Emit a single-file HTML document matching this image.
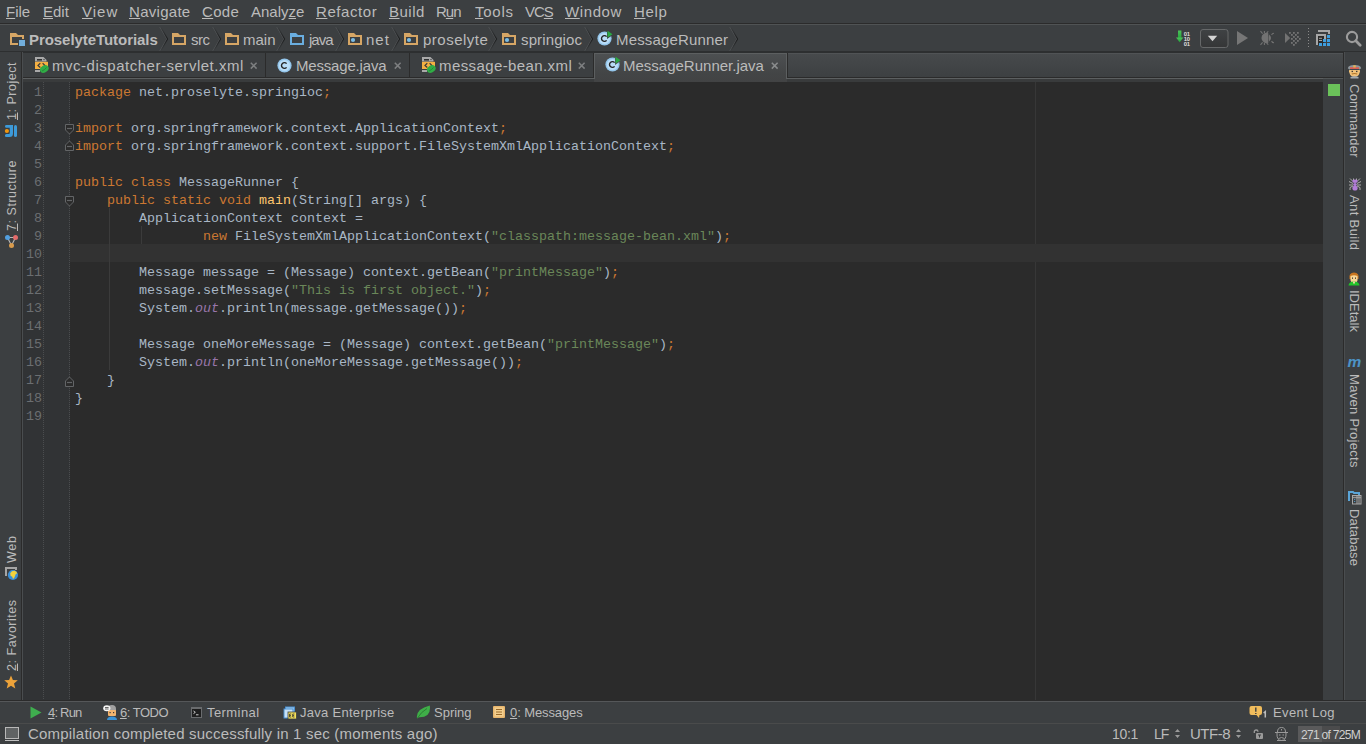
<!DOCTYPE html><html><head><meta charset="utf-8"><style>
*{margin:0;padding:0;box-sizing:border-box}
html,body{width:1366px;height:744px;overflow:hidden;background:#3c3f41;font-family:"Liberation Sans",sans-serif;color:#bbbbbb}
div,span,svg{position:absolute}
.t{white-space:nowrap;line-height:15px;font-size:15px;color:#bbbbbb}
.u{text-decoration:underline;text-underline-offset:1px;text-decoration-thickness:1px}
.code{left:75px;font-family:"Liberation Mono",monospace;font-size:13.33px;line-height:18px;color:#a9b7c6;white-space:pre}
.ln{font-family:"Liberation Mono",monospace;font-size:13.33px;line-height:18px;color:#6b6e71;white-space:pre;text-align:right;left:23px;width:19px}
.k{position:static;color:#cc7832}.s{position:static;color:#6a8759}.m{position:static;color:#ffc66d}.i{position:static;color:#9876aa;font-style:italic}
</style></head><body>
<div style="left:0px;top:0px;width:1366px;height:23px;background:#3c3f41;"></div>
<div style="left:0px;top:23px;width:1366px;height:1px;background:#2b2b2b;"></div>
<div style="left:0px;top:24px;width:1366px;height:1px;background:#505354;"></div>
<div style="left:0px;top:25px;width:1366px;height:27px;background:#3c3f41;"></div>
<div style="left:0px;top:51px;width:1366px;height:1px;background:#2d2f30;"></div>
<div style="left:0px;top:52px;width:21px;height:650px;background:#3c3f41;"></div>
<div style="left:21px;top:52px;width:1px;height:650px;background:#2b2b2b;"></div>
<div style="left:22px;top:52px;width:1px;height:650px;background:#4a4d4f;"></div>
<div style="left:1345px;top:52px;width:21px;height:650px;background:#3c3f41;"></div>
<div style="left:1343px;top:52px;width:1px;height:650px;background:#2b2b2b;"></div>
<div style="left:1344px;top:52px;width:1px;height:650px;background:#4a4d4f;"></div>
<div style="left:23px;top:52px;width:1320px;height:1px;background:#2d2f30;"></div>
<div style="left:23px;top:53px;width:1320px;height:24px;background:#3c3f41;"></div>
<div style="left:23px;top:77px;width:1320px;height:1px;background:#2b2b2b;"></div>
<div style="left:23px;top:78px;width:1320px;height:1px;background:#515556;"></div>
<div style="left:23px;top:79px;width:1300px;height:3px;background:#393b3c;"></div>
<div style="left:23px;top:82px;width:47px;height:618px;background:#313335;"></div>
<div style="left:70px;top:82px;width:1253px;height:618px;background:#2b2b2b;"></div>
<div style="left:1035px;top:82px;width:1px;height:618px;background:#373737;"></div>
<div style="left:70px;top:244px;width:1253px;height:18px;background:#323232;"></div>
<div style="left:1323px;top:79px;width:20px;height:621px;background:#3c3f41;"></div>
<div style="left:0px;top:700px;width:1366px;height:1px;background:#2b2b2b;"></div>
<div style="left:0px;top:701px;width:1366px;height:1px;background:#555759;"></div>
<div style="left:0px;top:702px;width:1366px;height:21px;background:#3c3f41;"></div>
<div style="left:0px;top:723px;width:1366px;height:21px;background:#3c3f41;"></div>
<div style="left:0px;top:723px;width:1366px;height:1px;background:#4a4b4b;"></div>
<span class="t" style="left:6.00px;top:4px;font-size:15px;line-height:15px;color:#bbbbbb;letter-spacing:0.000px;"><span class="u" style="position:static">F</span>ile</span>
<span class="t" style="left:43.00px;top:4px;font-size:15px;line-height:15px;color:#bbbbbb;letter-spacing:0.000px;"><span class="u" style="position:static">E</span>dit</span>
<span class="t" style="left:82.00px;top:4px;font-size:15px;line-height:15px;color:#bbbbbb;letter-spacing:1.000px;"><span class="u" style="position:static">V</span>iew</span>
<span class="t" style="left:129.00px;top:4px;font-size:15px;line-height:15px;color:#bbbbbb;letter-spacing:0.286px;"><span class="u" style="position:static">N</span>avigate</span>
<span class="t" style="left:202.00px;top:4px;font-size:15px;line-height:15px;color:#bbbbbb;letter-spacing:0.333px;"><span class="u" style="position:static">C</span>ode</span>
<span class="t" style="left:251.00px;top:4px;font-size:15px;line-height:15px;color:#bbbbbb;letter-spacing:0.000px;">Analy<span class="u" style="position:static">z</span>e</span>
<span class="t" style="left:316.00px;top:4px;font-size:15px;line-height:15px;color:#bbbbbb;letter-spacing:0.571px;"><span class="u" style="position:static">R</span>efactor</span>
<span class="t" style="left:389.00px;top:4px;font-size:15px;line-height:15px;color:#bbbbbb;letter-spacing:0.500px;"><span class="u" style="position:static">B</span>uild</span>
<span class="t" style="left:436.00px;top:4px;font-size:15px;line-height:15px;color:#bbbbbb;letter-spacing:-1.000px;">R<span class="u" style="position:static">u</span>n</span>
<span class="t" style="left:475.00px;top:4px;font-size:15px;line-height:15px;color:#bbbbbb;letter-spacing:0.750px;"><span class="u" style="position:static">T</span>ools</span>
<span class="t" style="left:525.00px;top:4px;font-size:15px;line-height:15px;color:#bbbbbb;letter-spacing:-1.000px;">VC<span class="u" style="position:static">S</span></span>
<span class="t" style="left:565.00px;top:4px;font-size:15px;line-height:15px;color:#bbbbbb;letter-spacing:0.600px;"><span class="u" style="position:static">W</span>indow</span>
<span class="t" style="left:634.00px;top:4px;font-size:15px;line-height:15px;color:#bbbbbb;letter-spacing:0.667px;"><span class="u" style="position:static">H</span>elp</span>
<svg style="left:10px;top:33px;" width="16" height="14" viewBox="0 0 16 14"><path d="M0 0h6l2 2h6v10h-14z" fill="#d6a665"/><rect x="2" y="4" width="10" height="6" fill="#3c3f41"/><rect x="8" y="6" width="8" height="8" fill="#3c3f41"/><rect x="9" y="7" width="6" height="6" fill="#72aedb"/></svg>
<span class="t" style="left:29.00px;top:32px;font-size:15px;line-height:15px;color:#bbbbbb;letter-spacing:-0.059px;;font-weight:bold">ProselyteTutorials</span>
<svg style="left:159px;top:27px;" width="10" height="24" viewBox="0 0 10 24"><defs><linearGradient id="cg1" gradientUnits="userSpaceOnUse" x1="0" y1="0" x2="0" y2="24"><stop offset="0" stop-color="#3c3f41"/><stop offset="0.5" stop-color="#1c1d1e"/><stop offset="1" stop-color="#3c3f41"/></linearGradient></defs><path d="M0.8 0 L7.8 12 L0.8 24" stroke="#505355" stroke-width="1" fill="none"/><path d="M1.8 0 L8.6 12 L1.8 24" stroke="url(#cg1)" stroke-width="1.1" fill="none"/></svg>
<svg style="left:172px;top:33px;" width="16" height="14" viewBox="0 0 16 14"><path d="M0 0h6l2 2h6v10h-14z" fill="#d6a665"/><rect x="2" y="4" width="10" height="6" fill="#3c3f41"/></svg>
<span class="t" style="left:191.00px;top:32px;font-size:15px;line-height:15px;color:#bbbbbb;letter-spacing:-0.500px;">src</span>
<svg style="left:212px;top:27px;" width="10" height="24" viewBox="0 0 10 24"><defs><linearGradient id="cg2" gradientUnits="userSpaceOnUse" x1="0" y1="0" x2="0" y2="24"><stop offset="0" stop-color="#3c3f41"/><stop offset="0.5" stop-color="#1c1d1e"/><stop offset="1" stop-color="#3c3f41"/></linearGradient></defs><path d="M0.8 0 L7.8 12 L0.8 24" stroke="#505355" stroke-width="1" fill="none"/><path d="M1.8 0 L8.6 12 L1.8 24" stroke="url(#cg2)" stroke-width="1.1" fill="none"/></svg>
<svg style="left:225px;top:33px;" width="16" height="14" viewBox="0 0 16 14"><path d="M0 0h6l2 2h6v10h-14z" fill="#d6a665"/><rect x="2" y="4" width="10" height="6" fill="#3c3f41"/></svg>
<span class="t" style="left:243.00px;top:32px;font-size:15px;line-height:15px;color:#bbbbbb;letter-spacing:0.000px;">main</span>
<svg style="left:276px;top:27px;" width="10" height="24" viewBox="0 0 10 24"><defs><linearGradient id="cg3" gradientUnits="userSpaceOnUse" x1="0" y1="0" x2="0" y2="24"><stop offset="0" stop-color="#3c3f41"/><stop offset="0.5" stop-color="#1c1d1e"/><stop offset="1" stop-color="#3c3f41"/></linearGradient></defs><path d="M0.8 0 L7.8 12 L0.8 24" stroke="#505355" stroke-width="1" fill="none"/><path d="M1.8 0 L8.6 12 L1.8 24" stroke="url(#cg3)" stroke-width="1.1" fill="none"/></svg>
<svg style="left:290px;top:33px;" width="16" height="14" viewBox="0 0 16 14"><path d="M0 0h6l2 2h6v10h-14z" fill="#6aaee0"/><rect x="2" y="4" width="10" height="6" fill="#3c3f41"/></svg>
<span class="t" style="left:309.00px;top:32px;font-size:15px;line-height:15px;color:#bbbbbb;letter-spacing:-1.000px;">java</span>
<svg style="left:335px;top:27px;" width="10" height="24" viewBox="0 0 10 24"><defs><linearGradient id="cg4" gradientUnits="userSpaceOnUse" x1="0" y1="0" x2="0" y2="24"><stop offset="0" stop-color="#3c3f41"/><stop offset="0.5" stop-color="#1c1d1e"/><stop offset="1" stop-color="#3c3f41"/></linearGradient></defs><path d="M0.8 0 L7.8 12 L0.8 24" stroke="#505355" stroke-width="1" fill="none"/><path d="M1.8 0 L8.6 12 L1.8 24" stroke="url(#cg4)" stroke-width="1.1" fill="none"/></svg>
<svg style="left:348px;top:33px;" width="16" height="14" viewBox="0 0 16 14"><path d="M0 0h6l2 2h6v10h-14z" fill="#d6a665"/><rect x="2" y="4" width="10" height="6" fill="#3c3f41"/><circle cx="5" cy="7" r="2.1" fill="#7bbde6"/></svg>
<span class="t" style="left:366.00px;top:32px;font-size:15px;line-height:15px;color:#bbbbbb;letter-spacing:1.000px;">net</span>
<svg style="left:391px;top:27px;" width="10" height="24" viewBox="0 0 10 24"><defs><linearGradient id="cg5" gradientUnits="userSpaceOnUse" x1="0" y1="0" x2="0" y2="24"><stop offset="0" stop-color="#3c3f41"/><stop offset="0.5" stop-color="#1c1d1e"/><stop offset="1" stop-color="#3c3f41"/></linearGradient></defs><path d="M0.8 0 L7.8 12 L0.8 24" stroke="#505355" stroke-width="1" fill="none"/><path d="M1.8 0 L8.6 12 L1.8 24" stroke="url(#cg5)" stroke-width="1.1" fill="none"/></svg>
<svg style="left:404px;top:33px;" width="16" height="14" viewBox="0 0 16 14"><path d="M0 0h6l2 2h6v10h-14z" fill="#d6a665"/><rect x="2" y="4" width="10" height="6" fill="#3c3f41"/><circle cx="5" cy="7" r="2.1" fill="#7bbde6"/></svg>
<span class="t" style="left:423.00px;top:32px;font-size:15px;line-height:15px;color:#bbbbbb;letter-spacing:0.500px;">proselyte</span>
<svg style="left:488px;top:27px;" width="10" height="24" viewBox="0 0 10 24"><defs><linearGradient id="cg6" gradientUnits="userSpaceOnUse" x1="0" y1="0" x2="0" y2="24"><stop offset="0" stop-color="#3c3f41"/><stop offset="0.5" stop-color="#1c1d1e"/><stop offset="1" stop-color="#3c3f41"/></linearGradient></defs><path d="M0.8 0 L7.8 12 L0.8 24" stroke="#505355" stroke-width="1" fill="none"/><path d="M1.8 0 L8.6 12 L1.8 24" stroke="url(#cg6)" stroke-width="1.1" fill="none"/></svg>
<svg style="left:502px;top:33px;" width="16" height="14" viewBox="0 0 16 14"><path d="M0 0h6l2 2h6v10h-14z" fill="#d6a665"/><rect x="2" y="4" width="10" height="6" fill="#3c3f41"/><circle cx="5" cy="7" r="2.1" fill="#7bbde6"/></svg>
<span class="t" style="left:521.00px;top:32px;font-size:15px;line-height:15px;color:#bbbbbb;letter-spacing:0.125px;">springioc</span>
<svg style="left:584px;top:27px;" width="10" height="24" viewBox="0 0 10 24"><defs><linearGradient id="cg7" gradientUnits="userSpaceOnUse" x1="0" y1="0" x2="0" y2="24"><stop offset="0" stop-color="#3c3f41"/><stop offset="0.5" stop-color="#1c1d1e"/><stop offset="1" stop-color="#3c3f41"/></linearGradient></defs><path d="M0.8 0 L7.8 12 L0.8 24" stroke="#505355" stroke-width="1" fill="none"/><path d="M1.8 0 L8.6 12 L1.8 24" stroke="url(#cg7)" stroke-width="1.1" fill="none"/></svg>
<svg style="left:597px;top:31px;" width="17" height="16" viewBox="0 0 17 16"><circle cx="7.5" cy="7.5" r="7.1" fill="#95c7ec"/><circle cx="7.5" cy="7.5" r="5.6" fill="#b9ddf8"/><path d="M9.6 5.6 A2.9 2.9 0 1 0 9.6 9.4" stroke="#262626" stroke-width="1.4" fill="none"/><path d="M10 -1 L16.5 3.5 L10 8z" fill="#3c3f41"/><path d="M10.5 -0.3 L15.5 3.2 L10.5 6.7z" fill="#2aa844"/></svg>
<span class="t" style="left:616.00px;top:32px;font-size:15px;line-height:15px;color:#bbbbbb;letter-spacing:0.167px;">MessageRunner</span>
<svg style="left:729px;top:27px;" width="10" height="24" viewBox="0 0 10 24"><defs><linearGradient id="cg8" gradientUnits="userSpaceOnUse" x1="0" y1="0" x2="0" y2="24"><stop offset="0" stop-color="#3c3f41"/><stop offset="0.5" stop-color="#1c1d1e"/><stop offset="1" stop-color="#3c3f41"/></linearGradient></defs><path d="M0.8 0 L7.8 12 L0.8 24" stroke="#505355" stroke-width="1" fill="none"/><path d="M1.8 0 L8.6 12 L1.8 24" stroke="url(#cg8)" stroke-width="1.1" fill="none"/></svg>
<svg style="left:1175px;top:29px;" width="17" height="18" viewBox="0 0 17 18"><defs><linearGradient id="ga" x1="0" y1="0" x2="0" y2="1"><stop offset="0" stop-color="#4cc35a"/><stop offset="1" stop-color="#23a33a"/></linearGradient></defs><rect x="3" y="1.5" width="3.4" height="8" fill="url(#ga)"/><path d="M1 8.5 H8.4 L4.7 13.2 Z" fill="url(#ga)"/><g font-family="Liberation Sans" font-weight="bold" font-size="5.9" fill="#dedede" letter-spacing="-0.2"><text x="8.7" y="6.9">01</text><text x="8.7" y="12">10</text><text x="8.7" y="17">01</text></g></svg>
<svg style="left:1200px;top:29px;" width="29" height="19" viewBox="0 0 29 19"><defs><linearGradient id="gd" x1="0" y1="0" x2="0" y2="1"><stop offset="0" stop-color="#3f4244"/><stop offset="1" stop-color="#353637"/></linearGradient></defs><rect x="0.5" y="0.5" width="27.5" height="18" rx="2.5" fill="url(#gd)" stroke="#666869"/><path d="M7.8 6.8 H17.2 L12.5 12.2 Z" fill="#d4d4d4"/></svg>
<svg style="left:1236px;top:30px;" width="13" height="16" viewBox="0 0 13 16"><path d="M1 1 L12 8 L1 15 Z" fill="#767676"/></svg>
<svg style="left:1256px;top:28px;" width="20" height="20" viewBox="0 0 20 20"><g fill="#727272"><path d="M12.3 5.2 A5.1 5.1 0 1 0 12.3 14.8 Z"/><path d="M13.1 6.6 Q16.9 10 13.1 13.4 Q12.3 10 13.1 6.6 Z"/></g><g stroke="#727272" stroke-width="1.1" fill="none"><path d="M4.5 3.2 L6.6 5.6 M8.4 3 V5 M12.2 3.2 L10.6 5.4 M4.5 16.8 L6.6 14.4 M8.4 17 V15 M12.2 16.8 L10.6 14.6 M15.6 7 Q16.2 5.2 18 5.2 M15.6 13 Q16.2 14.8 18 14.8"/></g></svg>
<svg style="left:1284px;top:28px;" width="18" height="20" viewBox="0 0 18 20"><path d="M1 5 L6.2 10 L1 15 Z" fill="#727272"/><g fill="#7a7a7a"><rect x="5" y="4" width="1.8" height="1.8" rx="0.6"/><rect x="7" y="6" width="1.8" height="1.8" rx="0.6"/><rect x="7" y="10" width="1.8" height="1.8" rx="0.6"/><rect x="7" y="14" width="1.8" height="1.8" rx="0.6"/><rect x="9" y="4" width="1.8" height="1.8" rx="0.6"/><rect x="9" y="8" width="1.8" height="1.8" rx="0.6"/><rect x="9" y="12" width="1.8" height="1.8" rx="0.6"/><rect x="9" y="16" width="1.8" height="1.8" rx="0.6"/><rect x="11" y="6" width="1.8" height="1.8" rx="0.6"/><rect x="11" y="10" width="1.8" height="1.8" rx="0.6"/><rect x="11" y="14" width="1.8" height="1.8" rx="0.6"/><rect x="13" y="4" width="1.8" height="1.8" rx="0.6"/><rect x="13" y="8" width="1.8" height="1.8" rx="0.6"/><rect x="13" y="12" width="1.8" height="1.8" rx="0.6"/><rect x="15" y="10" width="1.8" height="1.8" rx="0.6"/></g></svg>
<svg style="left:1308px;top:28px;" width="1" height="20" viewBox="0 0 1 20"><path d="M0.5 0 V20" stroke="#8a8a8a" stroke-dasharray="1 2"/></svg>
<svg style="left:1315px;top:30px;" width="17" height="17" viewBox="0 0 17 17"><path d="M3 1 H14 V4" stroke="#a6a6a6" stroke-width="2" fill="none"/><path d="M2 15 V5 H10 V9" stroke="#a6a6a6" stroke-width="2" fill="none"/><rect x="3" y="6" width="6" height="9" fill="#2b2b2b"/><path d="M4 8.3 H7 M4 10.5 H7" stroke="#a6a6a6" stroke-width="1"/><g fill="#3d9ee0"><rect x="12" y="5" width="3" height="3"/><rect x="8" y="9" width="3" height="3"/><rect x="12" y="9" width="3" height="3"/><rect x="4" y="13" width="3" height="3"/><rect x="8" y="13" width="3" height="3"/><rect x="12" y="13" width="3" height="3"/></g></svg>
<svg style="left:1344px;top:29px;" width="19" height="19" viewBox="0 0 19 19"><circle cx="8" cy="8" r="5.1" fill="none" stroke="#9c9c9c" stroke-width="2.1"/><path d="M11.8 11.8 L16.2 16.2" stroke="#9c9c9c" stroke-width="2.8" stroke-linecap="round"/></svg>
<div style="left:265px;top:53px;width:1px;height:24px;background:#2b2b2b;"></div>
<div style="left:409px;top:53px;width:1px;height:24px;background:#2b2b2b;"></div>
<div style="left:593px;top:53px;width:1px;height:24px;background:#2b2b2b;"></div>
<div style="left:594px;top:53px;width:193px;height:29px;background:linear-gradient(#4d5052,#434546 70%,#424344)"></div>
<div style="left:594px;top:53px;width:1px;height:26px;background:#5c5f60;"></div>
<div style="left:594px;top:53px;width:193px;height:1px;background:#5c5f60;"></div>
<div style="left:786px;top:53px;width:1px;height:26px;background:#5c5f60;"></div>
<div style="left:787px;top:53px;width:1px;height:25px;background:#2b2b2b;"></div>
<div style="left:23px;top:78px;width:571px;height:1px;background:#5c5f60;"></div>
<div style="left:787px;top:78px;width:536px;height:1px;background:#5c5f60;"></div>
<div style="left:788px;top:53px;width:555px;height:24px;background:linear-gradient(#474a4c,#3d4042)"></div>
<div style="left:788px;top:53px;width:555px;height:1px;background:#505355;"></div>
<svg style="left:34px;top:57px;" width="16" height="16" viewBox="0 0 16 16"><path d="M1 0 H9.5 L12.5 3 V4.5 H1 Z" fill="#a9a9a9"/><rect x="3" y="2" width="5" height="1.6" fill="#2f3132"/><circle cx="10" cy="2.6" r="0.7" fill="#2f3132"/><rect x="1" y="4.8" width="13" height="7.2" fill="#f5b042"/><path d="M6.3 6.3 L4 8.4 L6.3 10.5 M8.6 6.3 L10.9 8.4 L8.6 10.5" stroke="#3a3a3a" stroke-width="1.2" fill="none"/><rect x="1" y="13" width="5" height="2" fill="#a9a9a9"/><ellipse cx="10.3" cy="12" rx="4.6" ry="3.4" transform="rotate(-30 10.3 12)" fill="#30ad46"/><path d="M8 14 Q10.5 13 12.5 10.5" stroke="#1f7a30" stroke-width="0.7" fill="none"/></svg>
<span class="t" style="left:52.00px;top:58px;font-size:15px;line-height:15px;color:#bbbbbb;letter-spacing:0.520px;">mvc-dispatcher-servlet.xml</span>
<svg style="left:250px;top:62px;" width="8" height="8" viewBox="0 0 8 8"><path d="M0.8 0.8 L6.6 6.6 M6.6 0.8 L0.8 6.6" stroke="#7d7f80" stroke-width="1.5"/></svg>
<svg style="left:277px;top:58px;" width="17" height="16" viewBox="0 0 17 16"><circle cx="7.5" cy="7.5" r="7.1" fill="#95c7ec"/><circle cx="7.5" cy="7.5" r="5.6" fill="#b9ddf8"/><path d="M9.6 5.6 A2.9 2.9 0 1 0 9.6 9.4" stroke="#262626" stroke-width="1.4" fill="none"/></svg>
<span class="t" style="left:296.00px;top:58px;font-size:15px;line-height:15px;color:#bbbbbb;letter-spacing:-0.182px;">Message.java</span>
<svg style="left:394px;top:62px;" width="8" height="8" viewBox="0 0 8 8"><path d="M0.8 0.8 L6.6 6.6 M6.6 0.8 L0.8 6.6" stroke="#7d7f80" stroke-width="1.5"/></svg>
<svg style="left:421px;top:57px;" width="16" height="16" viewBox="0 0 16 16"><path d="M1 0 H9.5 L12.5 3 V4.5 H1 Z" fill="#a9a9a9"/><rect x="3" y="2" width="5" height="1.6" fill="#2f3132"/><circle cx="10" cy="2.6" r="0.7" fill="#2f3132"/><rect x="1" y="4.8" width="13" height="7.2" fill="#f5b042"/><path d="M6.3 6.3 L4 8.4 L6.3 10.5 M8.6 6.3 L10.9 8.4 L8.6 10.5" stroke="#3a3a3a" stroke-width="1.2" fill="none"/><rect x="1" y="13" width="5" height="2" fill="#a9a9a9"/><ellipse cx="10.3" cy="12" rx="4.6" ry="3.4" transform="rotate(-30 10.3 12)" fill="#30ad46"/><path d="M8 14 Q10.5 13 12.5 10.5" stroke="#1f7a30" stroke-width="0.7" fill="none"/></svg>
<span class="t" style="left:439.00px;top:58px;font-size:15px;line-height:15px;color:#bbbbbb;letter-spacing:0.400px;">message-bean.xml</span>
<svg style="left:578px;top:62px;" width="8" height="8" viewBox="0 0 8 8"><path d="M0.8 0.8 L6.6 6.6 M6.6 0.8 L0.8 6.6" stroke="#7d7f80" stroke-width="1.5"/></svg>
<svg style="left:605px;top:57px;" width="17" height="16" viewBox="0 0 17 16"><circle cx="7.5" cy="7.5" r="7.1" fill="#95c7ec"/><circle cx="7.5" cy="7.5" r="5.6" fill="#b9ddf8"/><path d="M9.6 5.6 A2.9 2.9 0 1 0 9.6 9.4" stroke="#262626" stroke-width="1.4" fill="none"/><path d="M10 -1 L16.5 3.5 L10 8z" fill="#4b4e50"/><path d="M10.5 -0.3 L15.5 3.2 L10.5 6.7z" fill="#2aa844"/></svg>
<span class="t" style="left:623.00px;top:58px;font-size:15px;line-height:15px;color:#bbbbbb;letter-spacing:0.000px;">MessageRunner.java</span>
<svg style="left:771px;top:62px;" width="8" height="8" viewBox="0 0 8 8"><path d="M0.8 0.8 L6.6 6.6 M6.6 0.8 L0.8 6.6" stroke="#8a8c8d" stroke-width="1.5"/></svg>
<div style="left:43px;top:82px;width:1px;height:618px;background:repeating-linear-gradient(#4b4d4f 0 1px,transparent 1px 2px)"></div>
<div style="left:69px;top:82px;width:1px;height:618px;background:repeating-linear-gradient(#4b4d4f 0 1px,transparent 1px 2px)"></div>
<div class="ln" style="top:84px">1
2
3
4
5
6
7
8
9
10
11
12
13
14
15
16
17
18
19
</div>
<svg style="left:65px;top:124px;" width="9" height="11" viewBox="0 0 9 11"><path d="M0.5 0.5 H8.5 V6 L4.5 10 L0.5 6 Z" fill="#2b2b2b" stroke="#636567"/><path d="M2 4.5 H7" stroke="#636567" stroke-width="1.2"/></svg>
<svg style="left:65px;top:140px;" width="9" height="11" viewBox="0 0 9 11"><path d="M0.5 10.5 H8.5 V5 L4.5 1 L0.5 5 Z" fill="#2b2b2b" stroke="#636567"/><path d="M2 6.5 H7" stroke="#636567" stroke-width="1.2"/></svg>
<svg style="left:65px;top:196px;" width="9" height="11" viewBox="0 0 9 11"><path d="M0.5 0.5 H8.5 V6 L4.5 10 L0.5 6 Z" fill="#2b2b2b" stroke="#636567"/><path d="M2 4.5 H7" stroke="#636567" stroke-width="1.2"/></svg>
<svg style="left:65px;top:376px;" width="9" height="11" viewBox="0 0 9 11"><path d="M0.5 10.5 H8.5 V5 L4.5 1 L0.5 5 Z" fill="#2b2b2b" stroke="#636567"/><path d="M2 6.5 H7" stroke="#636567" stroke-width="1.2"/></svg>
<div style="left:109px;top:208px;width:1px;height:162px;background:#3b3b3b;"></div>
<div style="left:141px;top:226px;width:1px;height:18px;background:#3b3b3b;"></div>
<div class="code" style="top:84px"><span class="k">package</span> net.proselyte.springioc<span class="k">;</span>

<span class="k">import</span> org.springframework.context.ApplicationContext<span class="k">;</span>
<span class="k">import</span> org.springframework.context.support.FileSystemXmlApplicationContext<span class="k">;</span>

<span class="k">public class</span> MessageRunner {
    <span class="k">public static void </span><span class="m">main</span>(String[] args) {
        ApplicationContext context =
                <span class="k">new </span>FileSystemXmlApplicationContext(<span class="s">&quot;classpath:message-bean.xml&quot;</span>)<span class="k">;</span>

        Message message = (Message) context.getBean(<span class="s">&quot;printMessage&quot;</span>)<span class="k">;</span>
        message.setMessage(<span class="s">&quot;This is first object.&quot;</span>)<span class="k">;</span>
        System.<span class="i">out</span>.println(message.getMessage())<span class="k">;</span>

        Message oneMoreMessage = (Message) context.getBean(<span class="s">&quot;printMessage&quot;</span>)<span class="k">;</span>
        System.<span class="i">out</span>.println(oneMoreMessage.getMessage())<span class="k">;</span>
    }
}
</div>
<div style="left:1328px;top:84px;width:12px;height:12px;background:#6bc25a;"></div>
<span class="t" style="left:6.42px;top:119.50px;font-size:12.5px;line-height:12.5px;letter-spacing:0.514px;transform-origin:0 0;transform:rotate(-90deg)"><span class="u" style="position:static">1</span>: Project</span>
<svg style="left:4px;top:124px;" width="14" height="14" viewBox="0 0 14 14"><path d="M2.4 1 H9 V9.5 Q9 13 5.5 13 H2.4 A1.5 1.5 0 0 1 2.4 10 H5 Q5.7 10 5.7 9.3 V3.8 H2.4 A1.4 1.4 0 0 1 2.4 1 Z" fill="#3d9ad8"/><rect x="10" y="1" width="3" height="12" rx="1.5" fill="#3d9ad8"/><circle cx="2.9" cy="7" r="2.6" fill="#3c3f41"/><circle cx="2.9" cy="7" r="2.1" fill="#f0960f"/></svg>
<span class="t" style="left:6.42px;top:230.50px;font-size:12.5px;line-height:12.5px;letter-spacing:0.534px;transform-origin:0 0;transform:rotate(-90deg)"><span class="u" style="position:static">7</span>: Structure</span>
<svg style="left:4px;top:234px;" width="15" height="15" viewBox="0 0 15 15"><path d="M3.5 3.5 H11.5 L7.5 11.5 Z" stroke="#b8b8b8" fill="none" stroke-width="1.1"/><circle cx="3.5" cy="3.5" r="2.5" fill="#52a0e0"/><circle cx="11.5" cy="3.5" r="2.5" fill="#e26a6a"/><circle cx="7.5" cy="11.5" r="2.5" fill="#d89b4c"/></svg>
<span class="t" style="left:6.42px;top:563.00px;font-size:12.5px;line-height:12.5px;letter-spacing:0.750px;transform-origin:0 0;transform:rotate(-90deg)">Web</span>
<svg style="left:5px;top:567px;" width="15" height="15" viewBox="0 0 15 15"><path d="M1 9 V1 H11 V3" stroke="#a6a6a6" stroke-width="2" fill="none"/><circle cx="7.9" cy="8" r="5.1" fill="#3a8fd8"/><path d="M5.2 6.2 Q6.8 3.6 9.6 3.8 Q11.8 4.3 12.3 6.6 L11.2 6.8 Q10.2 7.8 10 9.2 Q9.2 11.4 8 12 Q7.4 10.6 7.1 9.6 Q5 9.2 5.2 6.2 Z" fill="#f3d23c"/></svg>
<span class="t" style="left:6.42px;top:671.00px;font-size:12.5px;line-height:12.5px;letter-spacing:0.523px;transform-origin:0 0;transform:rotate(-90deg)"><span class="u" style="position:static">2</span>: Favorites</span>
<svg style="left:4px;top:675px;" width="15" height="14" viewBox="0 0 15 14"><path d="M7 0.5 L8.9 5 L13.8 5.3 L10 8.5 L11.3 13.4 L7 10.7 L2.7 13.4 L4 8.5 L0.2 5.3 L5.1 5 Z" fill="#eda33a"/></svg>
<span class="t" style="left:1360.50px;top:83.50px;font-size:13px;line-height:13px;letter-spacing:0.250px;transform-origin:0 0;transform:rotate(90deg)">Commander</span>
<svg style="left:1347px;top:64px;" width="15" height="15" viewBox="0 0 15 15"><path d="M0.8 4.2 Q1.5 1 7.5 1 Q13.5 1 14.2 4.2 L12.5 5.6 H2.5 Z" fill="#8f979c"/><rect x="3" y="3.3" width="9" height="1.6" fill="#e2574a"/><rect x="6.3" y="1.3" width="2.4" height="2.2" fill="#e8b24e"/><rect x="3" y="5" width="9" height="1.2" fill="#3d4850"/><path d="M2.2 6 H12.8 Q13.5 7.5 12.5 9 Q12 12.5 7.5 12.8 Q3 12.5 2.5 9 Q1.5 7.5 2.2 6 Z" fill="#f1c27a"/><rect x="4.6" y="6.8" width="1.3" height="1.3" fill="#2e2e2e"/><rect x="9.1" y="6.8" width="1.3" height="1.3" fill="#2e2e2e"/><path d="M4.5 9.6 Q7.5 8.2 10.5 9.6 L10 10.4 Q7.5 9.6 5 10.4 Z" fill="#b27628"/><path d="M3.5 14.5 V13 L6 12.2 H9 L11.5 13 V14.5 Z" fill="#a3a9ad"/></svg>
<span class="t" style="left:1360.50px;top:195.00px;font-size:13px;line-height:13px;letter-spacing:0.375px;transform-origin:0 0;transform:rotate(90deg)">Ant Build</span>
<svg style="left:1348px;top:177px;" width="14" height="15" viewBox="0 0 14 15"><g stroke="#b8b8b8" stroke-width="0.9" fill="none"><path d="M2 1.5 L4.5 4 M12 1.5 L9.5 4 M5.5 1.5 V3 M8.5 1.5 V3 M1 4.5 L5 6.5 M13 4.5 L9 6.5 M1 8 H5 M13 8 H9 M2 13 V10.5 L5 9 M12 13 V10.5 L9 9"/></g><ellipse cx="7" cy="4.3" rx="2.8" ry="1.7" fill="#b27ed8"/><ellipse cx="7" cy="7.6" rx="1.8" ry="1.5" fill="#b27ed8"/><ellipse cx="7" cy="11.2" rx="2.6" ry="2.4" fill="#b27ed8"/></svg>
<span class="t" style="left:1360.50px;top:290.00px;font-size:13px;line-height:13px;letter-spacing:0.002px;transform-origin:0 0;transform:rotate(90deg)">IDEtalk</span>
<svg style="left:1348px;top:272px;" width="12" height="14" viewBox="0 0 12 14"><path d="M1.5 7 Q0.5 0.5 6 0.5 Q11.5 0.5 10.5 7 Z" fill="#c8741e"/><path d="M2.5 4 Q6 2.5 9.5 4 V8 Q9.5 10.5 6 10.5 Q2.5 10.5 2.5 8 Z" fill="#f8d594"/><rect x="4" y="5.5" width="1" height="1.3" fill="#333"/><rect x="7" y="5.5" width="1" height="1.3" fill="#333"/><path d="M0.5 13.5 Q1 9.5 6 9.5 Q11 9.5 11.5 13.5 Z" fill="#22c42a"/><rect x="5" y="9.5" width="2" height="2" fill="#e8d0a0"/></svg>
<span class="t" style="left:1360.50px;top:373.50px;font-size:13px;line-height:13px;letter-spacing:0.302px;transform-origin:0 0;transform:rotate(90deg)">Maven Projects</span>
<svg style="left:1347px;top:355px;" width="15" height="13" viewBox="0 0 15 13"><text x="0.5" y="11.5" font-family="Liberation Sans" font-size="15.5" font-style="italic" font-weight="bold" fill="#4c93c6">m</text></svg>
<span class="t" style="left:1360.50px;top:509.00px;font-size:13px;line-height:13px;letter-spacing:0.194px;transform-origin:0 0;transform:rotate(90deg)">Database</span>
<svg style="left:1347px;top:490px;" width="15" height="15" viewBox="0 0 15 15"><path d="M2 11 V2 H6 L7 3 H12 V6" stroke="#5aa5d8" stroke-width="2" fill="none"/><rect x="4.5" y="8.5" width="10" height="6.5" fill="#3c3f41"/><rect x="5" y="5" width="9.5" height="9.5" fill="#a8a8a8"/><rect x="6" y="6.2" width="3.5" height="1" fill="#3c3f41"/><rect x="10.5" y="6.2" width="1" height="1" fill="#3c3f41"/><rect x="12.5" y="6.2" width="1" height="1" fill="#3c3f41"/><rect x="6" y="8.2" width="3.5" height="5.3" fill="#3c3f41"/><rect x="10.5" y="8.2" width="1" height="5.3" fill="#3c3f41"/><rect x="12.5" y="8.2" width="1" height="5.3" fill="#3c3f41"/><path d="M7.7 9 V13" stroke="#5aa5d8" stroke-dasharray="1 1"/></svg>
<svg style="left:30px;top:706px;" width="12" height="13" viewBox="0 0 12 13"><path d="M0.5 0.5 L11.5 6.5 L0.5 12.5z" fill="#3fae4f"/></svg>
<span class="t" style="left:48.00px;top:706px;font-size:13px;line-height:13px;color:#bbbbbb;letter-spacing:-0.800px;"><span class="u" style="position:static">4</span>: Run</span>
<svg style="left:103px;top:705px;" width="15" height="15" viewBox="0 0 15 15"><path d="M5 3 Q5 0 9 0 Q13 0 13 4 V7 H5 Z" fill="#a0a0a0"/><rect x="5" y="5" width="8" height="6" rx="1" fill="#f2b46e"/><rect x="6.5" y="7" width="1.2" height="1.2" fill="#3a3a3a"/><rect x="10" y="7" width="1.2" height="1.2" fill="#3a3a3a"/><path d="M4 15 Q4 11.5 9 11.5 Q14 11.5 14 15 Z" fill="#3b93d6"/><ellipse cx="3.8" cy="3.2" rx="3.6" ry="3" fill="#f4f4f4"/><path d="M2 2.5 H5.6 M2 4 H5.6" stroke="#555" stroke-width="0.9"/></svg>
<span class="t" style="left:120.00px;top:706px;font-size:13px;line-height:13px;color:#bbbbbb;letter-spacing:-0.500px;"><span class="u" style="position:static">6</span>: TODO</span>
<svg style="left:191px;top:707px;" width="11" height="11" viewBox="0 0 11 11"><rect x="0" y="0" width="11" height="11" fill="#6a6c6e"/><rect x="1" y="2" width="9" height="8" fill="#1f1f1f"/><path d="M2.5 4 L4.3 5.3 L2.5 6.6 M5 7.8 H7.5" stroke="#e0e0e0" stroke-width="0.9" fill="none"/></svg>
<span class="t" style="left:207.00px;top:706px;font-size:13px;line-height:13px;color:#bbbbbb;letter-spacing:0.429px;">Terminal</span>
<svg style="left:283px;top:706px;" width="14" height="14" viewBox="0 0 14 14"><rect x="2.5" y="1" width="9" height="8" fill="#9fcbee" stroke="#4a8fd0" stroke-width="1"/><rect x="1" y="3" width="9" height="9" fill="#c8e2f7" stroke="#4a8fd0" stroke-width="1"/><rect x="5" y="6" width="8.5" height="7" fill="#f5e15a" stroke="#3c3f41" stroke-width="0.8"/><path d="M6.5 8 H8.3 M6.5 9.5 H8 M6.5 11 H8.3 M6.5 8 V11 M9.7 8 H11.5 M9.7 9.5 H11.2 M9.7 11 H11.5 M9.7 8 V11" stroke="#333" stroke-width="0.8"/></svg>
<span class="t" style="left:300.00px;top:706px;font-size:13px;line-height:13px;color:#bbbbbb;letter-spacing:0.286px;">Java Enterprise</span>
<svg style="left:416px;top:705px;" width="15" height="14" viewBox="0 0 15 14"><path d="M1 13.5 Q-0.5 4 13.8 0.5 Q15.5 12.5 3 12.2 Z" fill="#3fae48"/><path d="M1.5 13 Q5 7 11 3.5" stroke="#2b7f33" stroke-width="1" fill="none"/></svg>
<span class="t" style="left:434.00px;top:706px;font-size:13px;line-height:13px;color:#bbbbbb;letter-spacing:0.000px;">Spring</span>
<svg style="left:493px;top:706px;" width="13" height="12" viewBox="0 0 13 12"><rect x="0" y="0" width="12" height="12" rx="1" fill="#e8b66e"/><rect x="1.5" y="1.5" width="9" height="9" fill="#f4cf8e"/><path d="M3 3.5 H9 M3 6 H9 M3 8.5 H9" stroke="#9a6a2a" stroke-width="1"/></svg>
<span class="t" style="left:510.00px;top:706px;font-size:13px;line-height:13px;color:#bbbbbb;letter-spacing:-0.100px;"><span class="u" style="position:static">0</span>: Messages</span>
<svg style="left:1249px;top:705px;" width="20" height="14" viewBox="0 0 20 14"><path d="M2.5 1 H11 Q13 1 13 3 V8 Q13 10 11 10 H10.5 L10 13 L7.5 10 H2.5 Q0.5 10 0.5 8 V3 Q0.5 1 2.5 1 Z" fill="#f0bc5c"/><path d="M6.8 2.5 V6.8 M6.8 8 V9" stroke="#3c3f41" stroke-width="1.4"/><path d="M14.6 8 L16.3 6.6 V12.6" stroke="#bbbbbb" stroke-width="1.5" fill="none"/></svg>
<span class="t" style="left:1273.00px;top:706px;font-size:13px;line-height:13px;color:#bbbbbb;letter-spacing:0.375px;">Event Log</span>
<svg style="left:5px;top:727px;" width="15" height="15" viewBox="0 0 15 15"><rect x="0.5" y="0.5" width="13" height="11" fill="#606364" stroke="#b8b8b8"/><path d="M0 13.5 H14" stroke="#c0c0c0"/></svg>
<span class="t" style="left:28.00px;top:726px;font-size:15px;line-height:15px;color:#bbbbbb;letter-spacing:0.196px;">Compilation completed successfully in 1 sec (moments ago)</span>
<span class="t" style="left:1112.00px;top:727px;font-size:14px;line-height:14px;color:#bbbbbb;letter-spacing:-0.333px;">10:1</span>
<span class="t" style="left:1154.00px;top:727px;font-size:14px;line-height:14px;color:#bbbbbb;letter-spacing:-1.000px;">LF</span>
<svg style="left:1175px;top:728px;" width="6" height="12" viewBox="0 0 6 12"><path d="M0 4 L2.5 1 L5 4z M0 7 L2.5 10 L5 7z" fill="#9a9a9a"/></svg>
<span class="t" style="left:1190.00px;top:726px;font-size:15px;line-height:15px;color:#bbbbbb;letter-spacing:-0.500px;">UTF-8</span>
<svg style="left:1236px;top:728px;" width="6" height="12" viewBox="0 0 6 12"><path d="M0 4 L2.5 1 L5 4z M0 7 L2.5 10 L5 7z" fill="#9a9a9a"/></svg>
<svg style="left:1253px;top:729px;" width="11" height="11" viewBox="0 0 11 11"><path d="M1.3 4 V2.8 Q1.3 1 3.2 1 Q5 1 5 2.8" stroke="#9a9a9a" fill="none" stroke-width="1.3"/><rect x="3" y="4" width="7" height="6" rx="1" fill="#9a9a9a"/><path d="M5 6 H8 M6.5 6 V8.5" stroke="#3c3f41" stroke-width="1"/></svg>
<svg style="left:1275px;top:727px;" width="13" height="15" viewBox="0 0 13 15"><g stroke="#9a9a9a" fill="none" stroke-width="1"><path d="M2.5 5 Q2.5 0.5 6.5 0.5 Q10.5 0.5 10.5 5"/><path d="M0 5.5 H13"/><path d="M2 6 Q1.5 13.5 6.5 13.5 Q11.5 13.5 11 6"/><path d="M3.5 11.5 Q6.5 9.5 9.5 11.5"/><path d="M2 13.5 H11"/></g><path d="M6.5 2 V3.5" stroke="#9a9a9a"/><path d="M4 8 H5.5 M7.5 8 H9" stroke="#9a9a9a"/></svg>
<div style="left:1298px;top:726px;width:42px;height:16px;background:#4b4b4c;"></div>
<div style="left:1298px;top:726px;width:24px;height:16px;background:#5a5a5b;"></div>
<span class="t" style="left:1301.00px;top:729px;font-size:12px;line-height:12px;color:#d0d0d0;letter-spacing:-0.700px;">271 of 725M</span>
</body></html>
